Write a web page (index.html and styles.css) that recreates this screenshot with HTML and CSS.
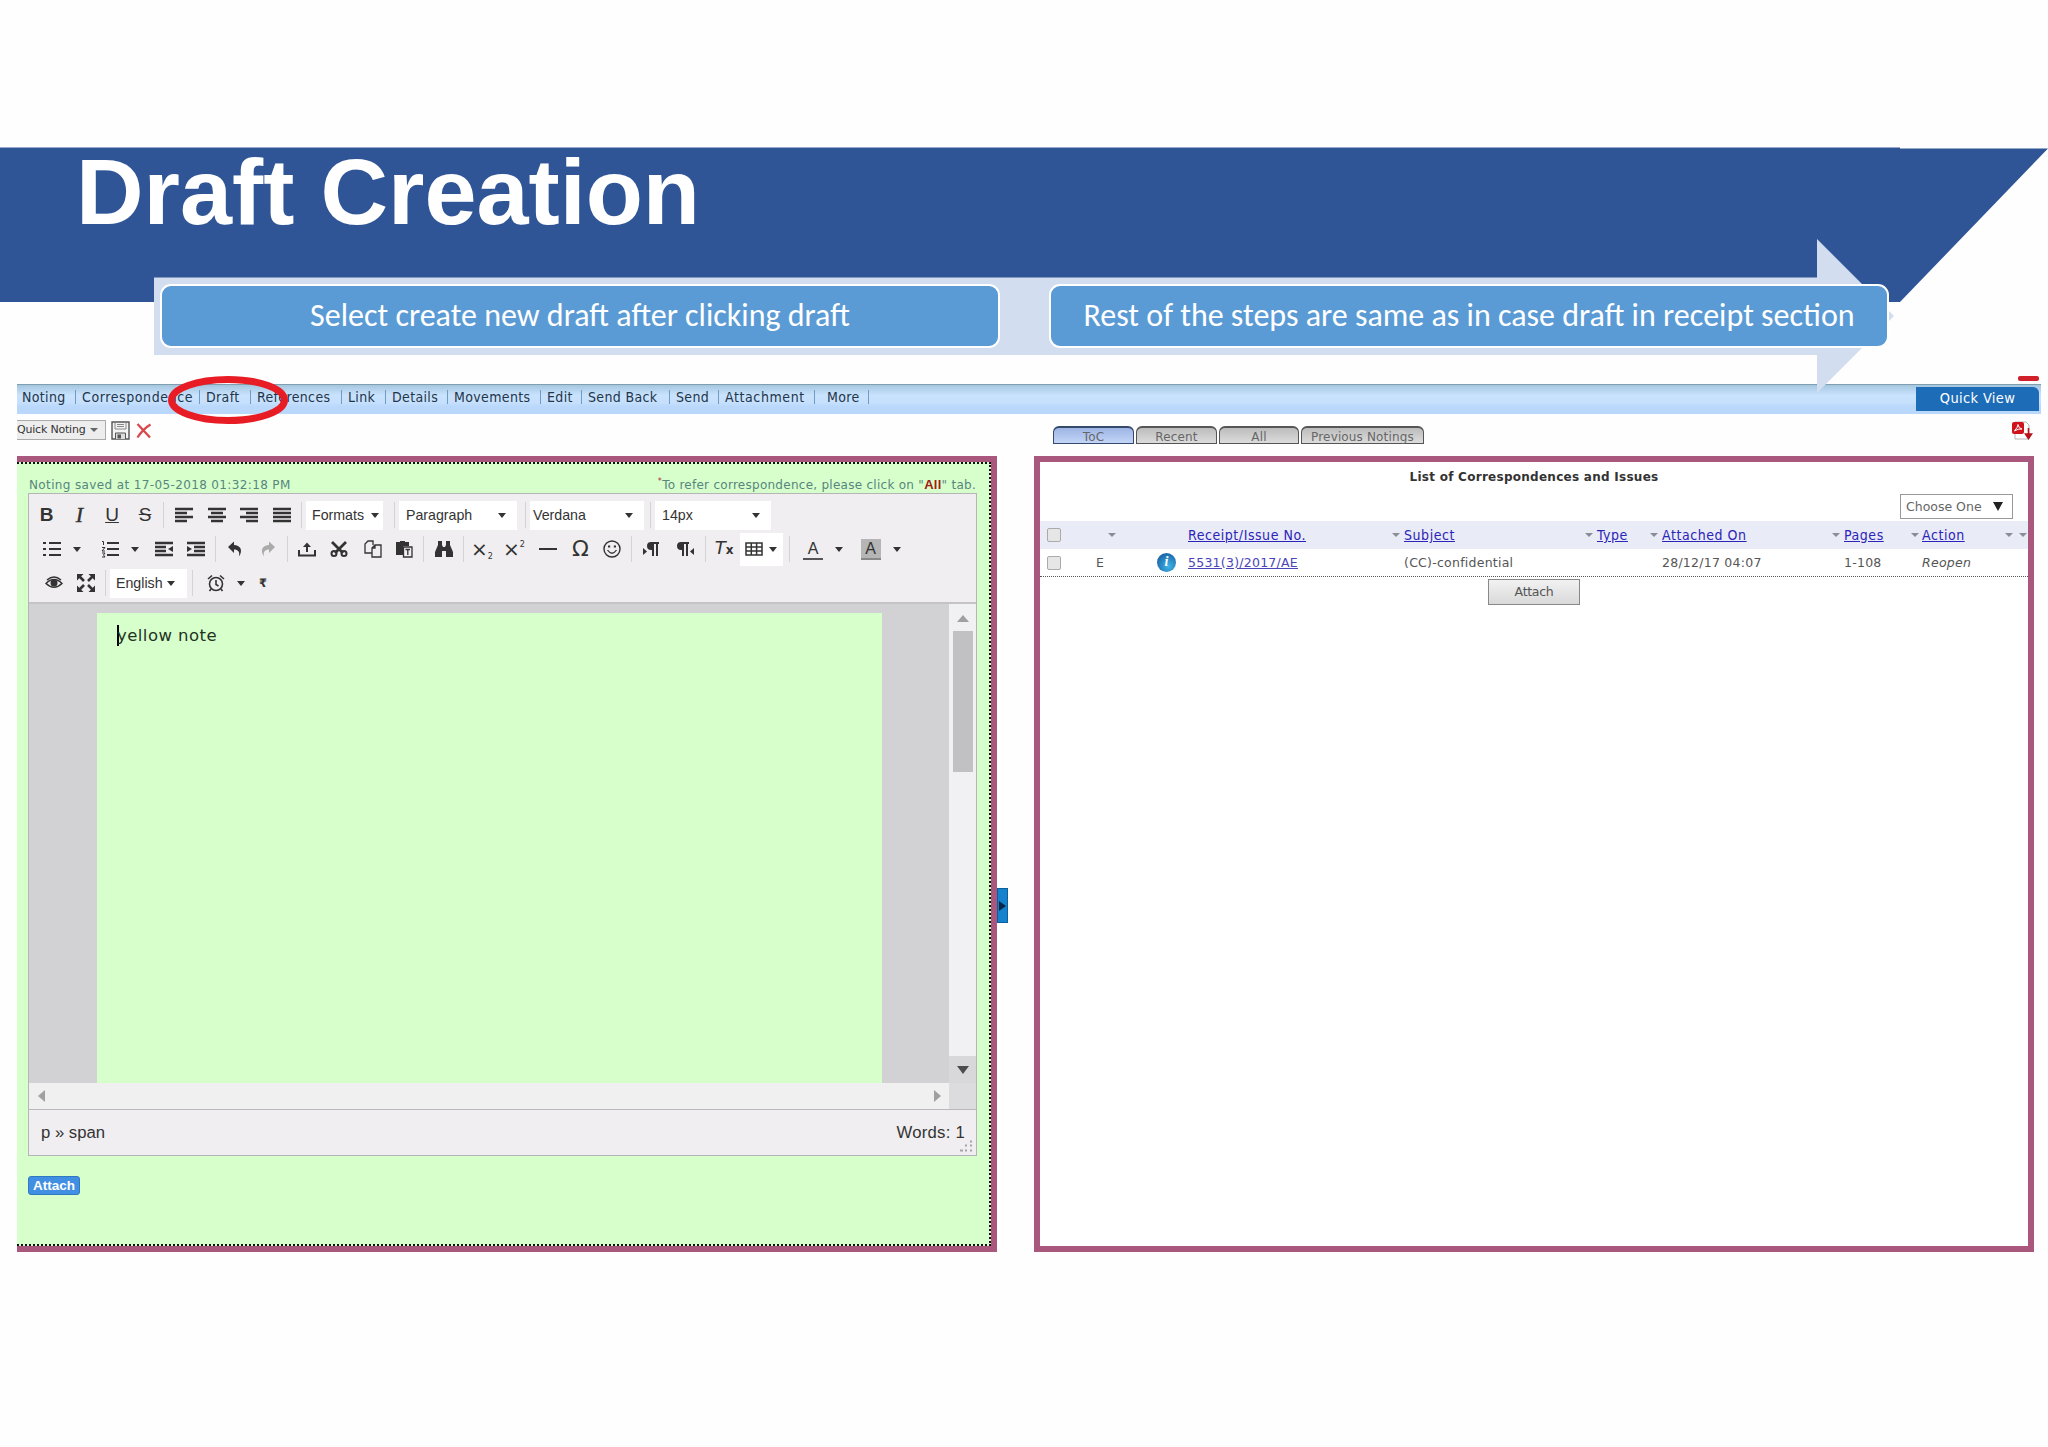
FILE: index.html
```html
<!DOCTYPE html>
<html lang="en">
  <head>
    <meta charset="UTF-8" />
    <meta name="viewport" content="width=device-width, initial-scale=1.0" />
    <title>Draft Creation</title>
    <link rel="stylesheet" href="styles.css">
  </head>
  <body>
    <div class="slide">
      <header class="banner">
        <svg class="banner-shape" width="2048" height="155" viewBox="0 0 2048 155">
          <path d="M0 0.500H1900V1.500H2048L1900 155H0Z" fill="#2f5597" />
        </svg>
        <h1>Draft Creation</h1>
      </header>

      <div class="process">
        <svg class="process-arrow" width="1741" height="154" viewBox="0 0 1741 154">
          <path d="M0 38.5H1663V0L1740 77L1663 154V116H0Z" fill="#d2deef" />
        </svg>
        <div class="step step-one"><span>Select create new draft after clicking draft</span></div>
        <div class="step step-two"><span>Rest of the steps are same as in case draft in receipt section</span></div>
      </div>

      <main class="app">
        <div class="minimize"></div>
        <nav class="menu">
          <a>Noting</a>
          <a class="wide">Correspondence</a>
          <a>Draft</a>
          <a>References</a>
          <a>Link</a>
          <a>Details</a>
          <a>Movements</a>
          <a>Edit</a>
          <a>Send Back</a>
          <a>Send</a>
          <a class="wide">Attachment</a>
          <a class="more">More</a>
          <span class="quick-view">Quick View</span>
        </nav>
        <svg class="highlight" width="122" height="50" viewBox="0 0 122 50">
          <ellipse cx="61" cy="25" rx="56.5" ry="20.5" fill="none" stroke="#e81c24" stroke-width="7" />
        </svg>

        <div class="actions">
          <div class="noting-tools">
            <span class="quick-noting">Quick Noting <i class="caret small"></i></span>
            <svg class="save" width="19" height="19" viewBox="0 0 19 19">
              <path d="M1 1H18V18H1Z" fill="#f4f4f4" stroke="#555" stroke-width="1.4" />
              <path d="M4 1.5V8H15V1.5M6 3.5H13M6 5.5H13" fill="none" stroke="#888" />
              <path d="M4.5 18V12H14.5V18" fill="#ddd" stroke="#555" />
              <path d="M6.500 13.500H10V17.500H6.500Z" fill="#555" />
            </svg>
            <svg class="remove" width="16" height="16" viewBox="0 0 16 16">
              <path d="M1.500 1L14 14.500M14.500 1.500Q7 6 1.500 14.500" fill="none" stroke="#d9474c" stroke-width="2.300" />
            </svg>
          </div>
          <div class="tabs">
            <span class="tab active">ToC</span>
            <span class="tab">Recent</span>
            <span class="tab">All</span>
            <span class="tab">Previous Notings</span>
          </div>
          <svg class="pdf" width="21" height="20" viewBox="0 0 21 20">
            <path d="M3 2H14L17 5V19H3Z" fill="#fff" stroke="#b5b5b5" />
            <rect x="0" y="2" width="12" height="12" rx="2" fill="#d0131b" />
            <path d="M2.500 11Q6 7 6 4.500Q6.500 8.500 10 9Q6 8.500 2.500 11" fill="none" stroke="#fff" />
            <path d="M16.500 8V15M13.500 14H19.500L16.500 18.500Z" fill="#b5121b" stroke="#b5121b" stroke-width="1.600" />
          </svg>
        </div>

        <div class="panels">
          <section class="panel note-panel">
            <div class="note-inner">
              <div class="note-info">
                <span class="saved">Noting saved at 17-05-2018 01:32:18 PM</span>
                <span class="hint"><sup>*</sup>To refer correspondence, please click on "<b>All</b>" tab.</span>
              </div>

              <div class="editor">
                <div class="toolbar">
                  <div class="row row-one">
                    <span class="letter"><b>B</b></span>
                    <span class="letter serif"><i>I</i></span>
                    <span class="letter"><u>U</u></span>
                    <span class="letter"><s>S</s></span>
                    <hr />
                    <svg class="icon"><use href="#left" /></svg>
                    <svg class="icon"><use href="#center" /></svg>
                    <svg class="icon"><use href="#right" /></svg>
                    <svg class="icon"><use href="#justify" /></svg>
                    <hr />
                    <span class="drop">Formats<i class="caret"></i></span>
                    <hr />
                    <span class="drop">Paragraph<i class="caret"></i></span>
                    <hr />
                    <span class="drop font">Verdana<i class="caret"></i></span>
                    <hr />
                    <span class="drop">14px<i class="caret"></i></span>
                  </div>
                  <div class="row row-two">
                    <span class="split"><svg class="icon"><use href="#bullets" /></svg><i class="caret"></i></span>
                    <span class="split"><svg class="icon"><use href="#numbers" /></svg><i class="caret"></i></span>
                    <svg class="icon"><use href="#outdent" /></svg>
                    <svg class="icon"><use href="#indent" /></svg>
                    <hr />
                    <svg class="icon"><use href="#undo" /></svg>
                    <svg class="icon redo"><use href="#undo" /></svg>
                    <hr />
                    <svg class="icon"><use href="#upload" /></svg>
                    <svg class="icon"><use href="#cut" /></svg>
                    <svg class="icon"><use href="#copy" /></svg>
                    <svg class="icon"><use href="#paste" /></svg>
                    <hr />
                    <svg class="icon"><use href="#find" /></svg>
                    <hr />
                    <span class="script">×<sub>2</sub></span>
                    <span class="script">×<sup>2</sup></span>
                    <svg class="icon"><use href="#line" /></svg>
                    <span class="omega">Ω</span>
                    <svg class="icon"><use href="#smile" /></svg>
                    <hr />
                    <svg class="icon"><use href="#ltr" /></svg>
                    <svg class="icon"><use href="#rtl" /></svg>
                    <hr />
                    <span class="clear"><i>T</i><small>x</small></span>
                    <span class="table-btn"><svg class="icon"><use href="#table" /></svg><i class="caret"></i></span>
                    <hr />
                    <span class="split color"><b>A</b><i class="caret"></i></span>
                    <span class="split color back"><b>A</b><i class="caret"></i></span>
                  </div>
                  <div class="row row-three">
                    <svg class="icon"><use href="#eye" /></svg>
                    <svg class="icon"><use href="#full" /></svg>
                    <hr />
                    <span class="drop">English<i class="caret"></i></span>
                    <hr />
                    <span class="split"><svg class="icon"><use href="#clock" /></svg><i class="caret"></i></span>
                    <span class="rupee">₹</span>
                  </div>
                </div>

                <div class="content">
                  <div class="page"><span class="cursor"></span>yellow note</div>
                  <div class="vscroll">
                    <svg width="12" height="7" viewBox="0 0 12 7"><path d="M6 0L12 7H0Z" fill="#a09fa1" /></svg>
                    <div class="thumb"></div>
                    <div class="down">
                      <svg width="12" height="8" viewBox="0 0 12 8"><path d="M0 0H12L6 8Z" fill="#4c4b4d" /></svg>
                    </div>
                  </div>
                </div>
                <div class="hscroll">
                  <svg width="7" height="12" viewBox="0 0 7 12"><path d="M7 0V12L0 6Z" fill="#a0a0a0" /></svg>
                  <svg class="to-right" width="7" height="12" viewBox="0 0 7 12"><path d="M0 0V12L7 6Z" fill="#a0a0a0" /></svg>
                  <div class="corner"></div>
                </div>
                <div class="status">
                  <span>p » span</span>
                  <span class="words">Words: 1</span>
                  <svg class="grip" width="13" height="12" viewBox="0 0 13 12">
                    <path d="M10 1.500H12M5 5.500H7M10 5.500H12M0 10.500H3M5 10.500H7M10 10.500H12" stroke="#a5a4a6" stroke-width="2" />
                  </svg>
                </div>
              </div>
              <button class="attach-note">Attach</button>
            </div>
          </section>

          <div class="handle">
            <svg width="7" height="10" viewBox="0 0 7 10"><path d="M0 0L7 5L0 10Z" fill="#0b2745" /></svg>
          </div>

          <section class="panel list-panel">
            <h2>List of Correspondences and Issues</h2>
            <div class="filter"><span class="choose">Choose One <i></i></span></div>
            <div class="line head">
              <span class="check"></span>
              <i class="caret sort status-sort"></i>
              <span></span>
              <a>Receipt/Issue No.</a>
              <i class="caret sort"></i>
              <a>Subject</a>
              <i class="caret sort"></i>
              <a>Type</a>
              <i class="caret sort"></i>
              <a>Attached On</a>
              <i class="caret sort"></i>
              <a>Pages</a>
              <i class="caret sort"></i>
              <a>Action</a>
              <span class="last-sorts"><i class="caret sort"></i><i class="caret sort"></i></span>
            </div>
            <div class="line record">
              <span class="check"></span>
              <span>E</span>
              <span class="info">i</span>
              <a>5531(3)/2017/AE</a>
              <span></span>
              <span>(CC)-confidential</span>
              <span></span>
              <span></span>
              <span></span>
              <span>28/12/17 04:07</span>
              <span></span>
              <span>1-108</span>
              <span></span>
              <em>Reopen</em>
              <span></span>
            </div>
            <button class="attach-list">Attach</button>
          </section>
        </div>
      </main>
    </div>

    <!-- toolbar icons -->
    <svg class="sprite">
      <symbol id="left" viewBox="0 0 18 18"><path d="M0 3H18M0 7H12M0 11H18M0 15H12" stroke="currentColor" stroke-width="2.600" /></symbol>
      <symbol id="center" viewBox="0 0 18 18"><path d="M0 3H18M3 7H15M0 11H18M3 15H15" stroke="currentColor" stroke-width="2.600" /></symbol>
      <symbol id="right" viewBox="0 0 18 18"><path d="M0 3H18M6 7H18M0 11H18M6 15H18" stroke="currentColor" stroke-width="2.600" /></symbol>
      <symbol id="justify" viewBox="0 0 18 18"><path d="M0 3H18M0 7H18M0 11H18M0 15H18" stroke="currentColor" stroke-width="2.600" /></symbol>
      <symbol id="bullets" viewBox="0 0 18 18"><path d="M0 3H3M0 9H3M0 15H3M6 3H18M6 9H18M6 15H18" stroke="currentColor" stroke-width="2" /></symbol>
      <symbol id="numbers" viewBox="0 0 18 18"><path d="M6 3H18M6 9H18M6 15H18" stroke="currentColor" stroke-width="2" /><path d="M1 1.500H2.500V5M1 7.500H4L1 11H4M1 13H4L2.500 15L4 17H1" fill="none" stroke="currentColor" /></symbol>
      <symbol id="outdent" viewBox="0 0 18 18"><path d="M0 3H18M0 7H11M0 11H11M0 15H18" stroke="currentColor" stroke-width="2.600" /><path d="M18 6V12L13 9Z" fill="currentColor" /></symbol>
      <symbol id="indent" viewBox="0 0 18 18"><path d="M0 3H18M7 7H18M7 11H18M0 15H18" stroke="currentColor" stroke-width="2.600" /><path d="M0 6V12L5 9Z" fill="currentColor" /></symbol>
      <symbol id="undo" viewBox="0 0 18 18"><path d="M2 7L8 1.500V5C14 5 17.500 10 13 16.500C14 11.500 12 9.500 8 9.500V13Z" fill="currentColor" /></symbol>
      <symbol id="upload" viewBox="0 0 18 18"><path d="M1 10V15.500H17V10M9 12V5" fill="none" stroke="currentColor" stroke-width="2" /><path d="M5 7L9 2.500L13 7Z" fill="currentColor" /></symbol>
      <symbol id="cut" viewBox="0 0 18 18"><path d="M2 2L13 13M16 2L5 13" stroke="currentColor" stroke-width="2.800" /><circle cx="4" cy="13.500" r="2.500" fill="none" stroke="currentColor" stroke-width="2" /><circle cx="14" cy="13.500" r="2.500" fill="none" stroke="currentColor" stroke-width="2" /></symbol>
      <symbol id="copy" viewBox="0 0 18 18"><path d="M8 13H1V4L4 1H9V5" fill="none" stroke="currentColor" stroke-width="1.300" /><path d="M8 8L11 5H17V17H8ZM11 5V8H8" fill="none" stroke="currentColor" stroke-width="1.300" /></symbol>
      <symbol id="paste" viewBox="0 0 18 18"><path d="M1 2H5V1H10V2H14V6H8V15H1Z" fill="currentColor" /><path d="M8.500 7H17V17H8.500Z" fill="#f0eef0" stroke="currentColor" stroke-width="1.300" /><path d="M10.500 9.500H15M12.800 9.500V15" stroke="currentColor" stroke-width="1.300" /></symbol>
      <symbol id="find" viewBox="0 0 18 18"><path d="M3 1H7V5L8 7H10L11 5V1H15V5L18 12V17H11V11H7V17H0V12L3 5Z" fill="currentColor" /></symbol>
      <symbol id="line" viewBox="0 0 18 18"><path d="M0 9H18" stroke="currentColor" stroke-width="2" /></symbol>
      <symbol id="smile" viewBox="0 0 18 18"><circle cx="9" cy="9" r="8" fill="none" stroke="currentColor" stroke-width="1.400" /><path d="M5 6.500H7.200M10.800 6.500H13" stroke="currentColor" stroke-width="2.200" /><path d="M4.500 10Q9 16.500 13.500 10" fill="none" stroke="currentColor" stroke-width="1.300" /></symbol>
      <symbol id="ltr" viewBox="0 0 18 18"><path d="M17 2H9A4 4 0 0 0 9 10H10V16H12V4H14V16H16V4H17Z" fill="currentColor" /><path d="M1 8L5 11.500L1 15Z" fill="currentColor" /></symbol>
      <symbol id="rtl" viewBox="0 0 18 18"><path d="M13 2H5A4 4 0 0 0 5 10H6V16H8V4H10V16H12V4H13Z" fill="currentColor" /><path d="M18 8L14 11.500L18 15Z" fill="currentColor" /></symbol>
      <symbol id="table" viewBox="0 0 18 18"><path d="M1 3H17V15H1ZM1 7H17M1 11H17M6.300 3V15M11.600 3V15" fill="none" stroke="currentColor" stroke-width="1.500" /></symbol>
      <symbol id="eye" viewBox="0 0 18 18"><path d="M1 9.500Q9 1.500 17 9.500Q9 17 1 9.500ZM2 6Q9 0 16 6" fill="none" stroke="currentColor" stroke-width="1.500" /><circle cx="9" cy="9" r="3.500" fill="currentColor" /></symbol>
      <symbol id="full" viewBox="0 0 18 18"><path d="M0 0H6.500L0 6.500ZM18 0V6.500L11.500 0ZM0 18V11.500L6.500 18ZM18 18H11.500L18 11.500Z" fill="currentColor" /><path d="M2 2L7 7M16 2L11 7M2 16L7 11M16 16L11 11" stroke="currentColor" stroke-width="2.600" /></symbol>
      <symbol id="clock" viewBox="0 0 18 18"><circle cx="9" cy="10" r="6.500" fill="none" stroke="currentColor" stroke-width="1.600" /><path d="M9 6V10.500L11.500 12M1 5L5 1.500M17 5L13 1.500M4 15L2.500 17M14 15L15.500 17" fill="none" stroke="currentColor" stroke-width="1.600" /></symbol>
    </svg>
  </body>
</html>
```
FILE: styles.css
```css
* {
  box-sizing: border-box;
}
body {
  margin: 0;
  background-color: #fefefe;
  font-family: "DejaVu Sans", sans-serif;
  color: #333;
}
.slide {
  position: relative;
  width: 2048px;
  height: 1447px;
  padding-top: 147px;
  overflow: hidden;
}
.sprite {
  display: none;
}

/* banner */
.banner {
  position: relative;
  height: 229px;
}
.banner-shape {
  position: absolute;
  top: 0;
  left: 0;
}
h1 {
  position: relative;
  margin: 0;
  padding: 0 0 0 76px;
  font: bold 93.6px/90px "Liberation Sans", Arial, sans-serif;
  color: #fff;
}

/* the arrow lies over the banner and the menu */
.process {
  position: absolute;
  z-index: 2;
  top: 239px;
  left: 154px;
  width: 1741px;
  height: 154px;
  padding: 45px 6px 0 6px;
  display: flex;
  gap: 49px;
}
.process-arrow {
  position: absolute;
  top: 0;
  left: 0;
}
.step {
  position: relative;
  flex: 1;
  height: 64px;
  border: 2px solid #fff;
  border-radius: 11px;
  background-color: #5b9bd5;
  color: #fff;
  font: 32px/59px Carlito, Lato, sans-serif;
  text-align: center;
  white-space: nowrap;
}

/* application */
.app {
  position: relative;
  margin-left: 17px;
  width: 2024px;
}
.minimize {
  margin-left: 2001px;
  width: 21px;
  height: 5px;
  border-radius: 2px;
  background-color: #d0202a;
}
.menu {
  margin-top: 3px;
  height: 30px;
  display: grid;
  grid-template-columns: 59px 124px 51px 91px 44px 62px 93px 41px 88px 49px 96px 54px 1fr;
  border-top: 1px solid #7f9fae;
  background: linear-gradient(#a5c6df, #c9e2fd 35%, #c6e0fd 60%, #b9d8fb 75%);
  font: 14px/24px "DejaVu Sans Condensed", "DejaVu Sans", sans-serif;
  font-stretch: condensed;
  letter-spacing: 0.350px;
  color: #22364a;
  white-space: nowrap;
}
.menu a {
  padding-left: 6px;
  background: linear-gradient(#6f9cc0, #6f9cc0) right 5px / 1px 14px no-repeat;
}
.menu a:first-child {
  padding-left: 5px;
}
.menu .wide {
  letter-spacing: 0.600px;
}
.menu .more {
  padding-left: 12px;
}
.quick-view {
  justify-self: end;
  margin: 2px 2px 0 0;
  width: 123px;
  height: 24px;
  border-radius: 0 6px 0 0;
  background-color: #1c6cb8;
  color: #fff;
  font-size: 14.500px;
  line-height: 22px;
  text-align: center;
}
.highlight {
  position: absolute;
  top: -1px;
  left: 150px;
}
.actions {
  display: flex;
  height: 42px;
}
.noting-tools {
  display: flex;
  align-items: flex-start;
  width: 1036px;
  padding-top: 6px;
}
.quick-noting {
  width: 89px;
  height: 20px;
  border: 1px solid #aaa;
  border-left: 0;
  background-color: #ededed;
  font-size: 11px;
  line-height: 18px;
  letter-spacing: -0.200px;
  white-space: nowrap;
}
.save {
  margin: 1px 6px 0 5px;
}
.remove {
  margin-top: 3px;
}
.tabs {
  display: grid;
  grid-template-columns: 81px 81px 80px 123px;
  gap: 2px;
  padding-top: 12px;
}
.tab {
  height: 18px;
  border: 1px solid #555;
  border-top-width: 2px;
  border-radius: 6px 6px 0 0;
  background: linear-gradient(#bcbcbc, #dcdcdc);
  color: #666;
  font-size: 12px;
  line-height: 19px;
  letter-spacing: 0.150px;
  text-align: center;
  white-space: nowrap;
}
.tab.active {
  background: linear-gradient(#9db5e4, #c3d5f8);
  border-color: #35496b;
}
.pdf {
  margin: 6px 8px 0 auto;
}

/* panels */
.panels {
  display: flex;
  height: 796px;
}
.panel {
  border: 6px solid #a9577c;
}
.note-panel {
  width: 980px;
  border-left: 0;
}
.note-inner {
  height: 784px;
  padding: 7px 13px 0 11px;
  border: 2px dotted #111;
  border-left: 0;
  background-color: #d6ffcc;
}
.note-info {
  display: flex;
  justify-content: space-between;
  height: 22px;
  padding-left: 1px;
  color: #58857c;
  font-size: 12px;
  line-height: 28px;
  white-space: nowrap;
}
.saved {
  letter-spacing: 0.370px;
}
.hint {
  letter-spacing: 0.270px;
}
.hint sup {
  font-size: 8px;
  line-height: 0;
  color: #a33;
}
.hint b {
  color: #a31c10;
  font-family: "Liberation Sans", sans-serif;
  font-size: 13px;
  line-height: 0;
}
.editor {
  width: 949px;
  height: 663px;
  border: 1px solid #b5b5b7;
  background-color: #f0eef0;
}
.toolbar {
  height: 110px;
  padding-top: 4px;
  border-bottom: 2px solid #c4c3c5;
  color: #333;
}
.row {
  display: grid;
  align-items: center;
  justify-items: center;
  height: 34px;
}
.row-one {
  padding-left: 1px;
  grid-template-columns: 33px 33px 32px 34px 6px 32px 33px 32px 33px 8px 77px 16px 118px 13px 114px 11px 116px;
}
.row-two {
  padding-left: 5px;
  grid-template-columns:
    56px 60px 27px 38px 5px 30px 35px 7px 30px 34px 33px 30px 9px 32px 8px
    28px 36px 32px 33px 30px 9px 30px 38px 6px 28px 46px 10px 58px 57px;
}
.row-three {
  padding-left: 5px;
  grid-template-columns: 39px 26px 11px 77px 10px 57px 18px;
}
.row hr {
  justify-self: end;
  width: 1px;
  height: 26px;
  margin: 0 4px 0 0;
  border: 0;
  background-color: #d4d3d5;
}
.icon {
  width: 18px;
  height: 18px;
}
.redo {
  transform: scaleX(-1);
  color: #aaa;
}
.letter {
  font: 19px/20px "Liberation Sans", sans-serif;
}
.serif {
  font-family: "Liberation Serif", serif;
  font-size: 22px;
  -webkit-text-stroke: 0.400px #333;
}
.drop {
  display: flex;
  align-items: center;
  justify-content: space-between;
  width: 100%;
  height: 29px;
  padding: 0 11px 0 7px;
  background-color: #fff;
  font: 14.200px "Liberation Sans", sans-serif;
}
.row-one .drop:nth-child(11) {
  padding: 0 4px 0 6px;
}
.row-three .drop {
  padding: 0 12px 0 6px;
}
.drop.font {
  padding-left: 3px;
}
.caret {
  display: inline-block;
  border: 4.500px solid transparent;
  border-top: 5px solid #333;
  border-bottom: 0;
}
.caret.small {
  border-width: 4px 4px 0;
  margin: 0 0 1px 1px;
  border-top-color: #666;
}
.split {
  display: flex;
  align-items: center;
  gap: 12px;
}
.script {
  font-size: 20px;
  line-height: 20px;
  white-space: nowrap;
}
.script sub,
.script sup {
  font-size: 8px;
  line-height: 0;
}
.script sup {
  vertical-align: 9px;
}
.script sub {
  vertical-align: -3px;
}
.omega {
  font-size: 22px;
  line-height: 20px;
}
.clear {
  font-size: 18px;
  line-height: 20px;
  white-space: nowrap;
}
.clear small {
  font-size: 12px;
  font-weight: bold;
}
.table-btn {
  display: flex;
  align-items: center;
  justify-content: center;
  gap: 6px;
  width: 43px;
  height: 33px;
  background-color: #fff;
}
.color b {
  width: 20px;
  height: 21px;
  border-bottom: 2px solid #555;
  font: 16px/20px "Liberation Sans", sans-serif;
  text-align: center;
}
.color.back b {
  background-color: #b5b5b5;
  border-color: #888;
}
.rupee {
  font-size: 11.500px;
  font-weight: bold;
}
.content {
  display: flex;
  height: 479px;
  padding-left: 68px;
  background-color: #d2d1d3;
}
.page {
  width: 785px;
  height: 470px;
  margin-top: 9px;
  padding: 12px 0 0 20px;
  background-color: #d6ffcc;
  color: #223322;
  font-size: 16.500px;
  line-height: 22px;
  letter-spacing: 0.450px;
}
.cursor {
  display: inline-block;
  width: 2px;
  height: 21px;
  margin-right: -2px;
  vertical-align: -5px;
  background-color: #000;
}
.vscroll {
  display: flex;
  flex-direction: column;
  align-items: center;
  width: 27px;
  margin-left: auto;
  padding-top: 11px;
  background-color: #f1f0f2;
}
.thumb {
  width: 20px;
  height: 141px;
  margin-top: 9px;
  background-color: #c1c0c2;
}
.down {
  display: flex;
  align-items: center;
  justify-content: center;
  width: 100%;
  height: 27px;
  margin-top: auto;
  background-color: #d8d7d9;
}
.hscroll {
  display: flex;
  align-items: center;
  height: 27px;
  padding-left: 9px;
  border-bottom: 1px solid #b9b8ba;
  background-color: #f0f0f0;
}
.to-right {
  margin: 0 8px 0 auto;
}
.corner {
  width: 27px;
  height: 26px;
  background-color: #dcdbdd;
}
.status {
  position: relative;
  display: flex;
  justify-content: space-between;
  padding: 0 11px 0 12px;
  font: 16.700px/46px "Liberation Sans", sans-serif;
}
.words {
  letter-spacing: 0.250px;
}
.grip {
  position: absolute;
  right: 3px;
  bottom: 4px;
}
.attach-note {
  display: block;
  width: 52px;
  height: 19px;
  margin-top: 20px;
  padding: 0;
  border: 1px solid #2f78c4;
  border-radius: 3px;
  background-color: #418fe2;
  color: #fff;
  font: bold 13.500px/16px "Liberation Sans", sans-serif;
}
.handle {
  display: flex;
  align-items: center;
  justify-content: center;
  width: 11px;
  height: 35px;
  margin-top: 432px;
  border: 1px solid #0d5f9c;
  background-color: #1482cc;
}
.list-panel {
  width: 1000px;
  margin-left: 26px;
  background-color: #fff;
}
h2 {
  margin: 0;
  padding-top: 6px;
  height: 32px;
  font-size: 12px;
  line-height: 18px;
  letter-spacing: 0.270px;
  text-align: center;
}
.filter {
  display: flex;
  justify-content: flex-end;
  height: 27px;
  padding-right: 15px;
}
.choose {
  display: flex;
  align-items: center;
  justify-content: space-between;
  width: 113px;
  height: 25px;
  padding: 0 9px 0 5px;
  border: 1px solid #999;
  color: #666;
  font-size: 12.500px;
}
.choose i {
  border: 5px solid transparent;
  border-top: 9px solid #222;
  border-bottom: 0;
}
.line {
  display: grid;
  grid-template-columns: 56px 56px 36px 204px 12px 181px 12px 53px 12px 170px 12px 67px 11px 79px 27px;
  align-items: center;
  height: 28px;
  font-size: 12.500px;
  letter-spacing: 0.250px;
  color: #555;
  white-space: nowrap;
}
.line a {
  color: #2a24b8;
  text-decoration: underline;
}
.head {
  background-color: #e9ebf7;
  font: 14px "DejaVu Sans Condensed", "DejaVu Sans", sans-serif;
  font-stretch: condensed;
  letter-spacing: 0.550px;
}
.record {
  border-bottom: 1px dotted #555;
}
.record a {
  color: #4a44b8;
}
.check {
  width: 14px;
  height: 14px;
  margin-left: 7px;
  border: 1px solid #aaa;
  border-radius: 2px;
  background-color: #e6e6e6;
}
.caret.sort {
  justify-self: start;
  border-width: 4px 4px 0;
  border-top-color: #8a8c96;
}
.status-sort {
  margin-left: 12px;
}
.last-sorts {
  display: flex;
  gap: 6px;
  padding-left: 4px;
}
.info {
  width: 19px;
  height: 19px;
  margin-left: 5px;
  border-radius: 50%;
  background: radial-gradient(circle at 60% 70%, #3fb4e8, #1c66a8 75%);
  color: #fff;
  font: italic bold 14px/18px "Liberation Serif", serif;
  text-align: center;
}
.attach-list {
  display: block;
  width: 92px;
  height: 26px;
  margin: 2px 0 0 448px;
  padding: 0;
  border: 1px solid #888;
  background: linear-gradient(#f2f2f2, #d9d9d9);
  color: #555;
  font: 12.500px/20px "DejaVu Sans", sans-serif;
  letter-spacing: -0.300px;
}
```
